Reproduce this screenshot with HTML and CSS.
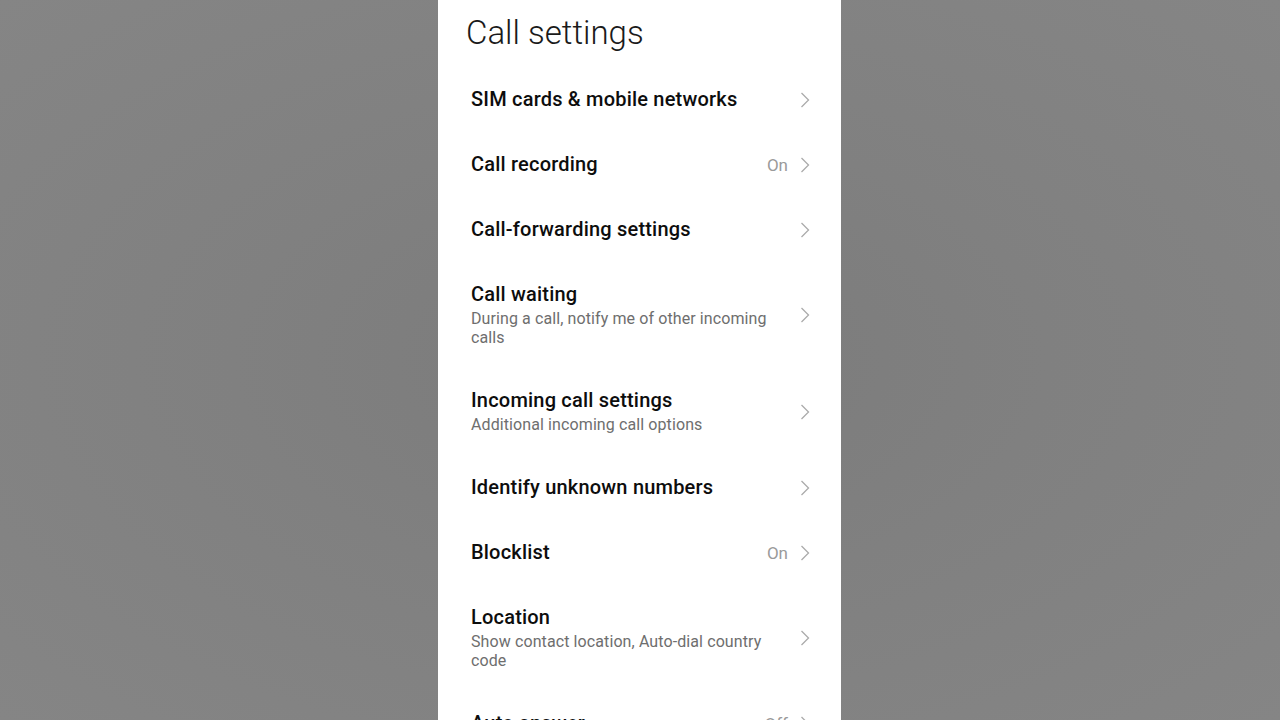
FILE: index.html
```html
<!DOCTYPE html>
<html lang="en">
<head>
<meta charset="utf-8">
<title>Call settings</title>
<link rel="stylesheet" href="styles.css">
</head>
<body>
<div class="stage">
  <div class="phone">
    <header class="header"><h1 class="title">Call settings</h1></header>
    <ul class="list">
      <li class="row">
        <div class="text"><div class="label">SIM cards &amp; mobile networks</div></div>
        <svg class="chev" viewBox="0 0 10 16"><path d="M1.5 1 L8.5 8 L1.5 15"/></svg>
      </li>
      <li class="row">
        <div class="text"><div class="label">Call recording</div></div>
        <span class="value">On</span>
        <svg class="chev" viewBox="0 0 10 16"><path d="M1.5 1 L8.5 8 L1.5 15"/></svg>
      </li>
      <li class="row">
        <div class="text"><div class="label">Call-forwarding settings</div></div>
        <svg class="chev" viewBox="0 0 10 16"><path d="M1.5 1 L8.5 8 L1.5 15"/></svg>
      </li>
      <li class="row">
        <div class="text"><div class="label">Call waiting</div><div class="sub">During a call, notify me of other incoming calls</div></div>
        <svg class="chev" viewBox="0 0 10 16"><path d="M1.5 1 L8.5 8 L1.5 15"/></svg>
      </li>
      <li class="row">
        <div class="text"><div class="label">Incoming call settings</div><div class="sub">Additional incoming call options</div></div>
        <svg class="chev" viewBox="0 0 10 16"><path d="M1.5 1 L8.5 8 L1.5 15"/></svg>
      </li>
      <li class="row">
        <div class="text"><div class="label">Identify unknown numbers</div></div>
        <svg class="chev" viewBox="0 0 10 16"><path d="M1.5 1 L8.5 8 L1.5 15"/></svg>
      </li>
      <li class="row">
        <div class="text"><div class="label">Blocklist</div></div>
        <span class="value">On</span>
        <svg class="chev" viewBox="0 0 10 16"><path d="M1.5 1 L8.5 8 L1.5 15"/></svg>
      </li>
      <li class="row">
        <div class="text"><div class="label">Location</div><div class="sub">Show contact location, Auto-dial country code</div></div>
        <svg class="chev" viewBox="0 0 10 16"><path d="M1.5 1 L8.5 8 L1.5 15"/></svg>
      </li>
      <li class="row">
        <div class="text"><div class="label">Auto answer</div></div>
        <span class="value">Off</span>
        <svg class="chev" viewBox="0 0 10 16"><path d="M1.5 1 L8.5 8 L1.5 15"/></svg>
      </li>
    </ul>
  </div>
</div>
</body>
</html>
```

FILE: styles.css
```css
* { box-sizing: border-box; }
html, body { margin: 0; padding: 0; height: 100%; }
body {
  background: radial-gradient(ellipse at 50% 50%, #7b7b7b 0%, #808080 45%, #858585 100%);
  font-family: Roboto, "Noto Sans", "Liberation Sans", sans-serif;
  overflow: hidden;
}
.stage {
  height: 720px;
  display: flex;
  justify-content: center;
  padding-right: 1px;
}
.phone {
  width: 403px;
  height: 720px;
  background: #ffffff;
  overflow: hidden;
}
.header {
  height: 67px;
  padding: 12px 0 0 28px;
}
.title {
  margin: 0;
  font-size: 33px;
  font-weight: 300;
  line-height: 42px;
  color: #1a1a1a;
}
.list {
  list-style: none;
  margin: 0;
  padding: 0;
}
.row {
  display: flex;
  align-items: center;
  padding: 21px 31px 21px 33px;
}
.text {
  flex: 1;
  min-width: 0;
}
.label {
  font-size: 20px;
  font-weight: 500;
  line-height: 23px;
  letter-spacing: 0.2px;
  color: #0d0d0d;
}
.sub {
  margin-top: 3px;
  font-size: 16px;
  line-height: 19px;
  letter-spacing: 0.1px;
  color: #6e6e6e;
  padding-right: 22px;
}
.value {
  font-size: 17px;
  color: #9a9a9a;
  margin-right: 12px;
}
.chev {
  width: 10px;
  height: 16px;
  flex: none;
  fill: none;
  stroke: #ababab;
  stroke-width: 1.3;
}
```
